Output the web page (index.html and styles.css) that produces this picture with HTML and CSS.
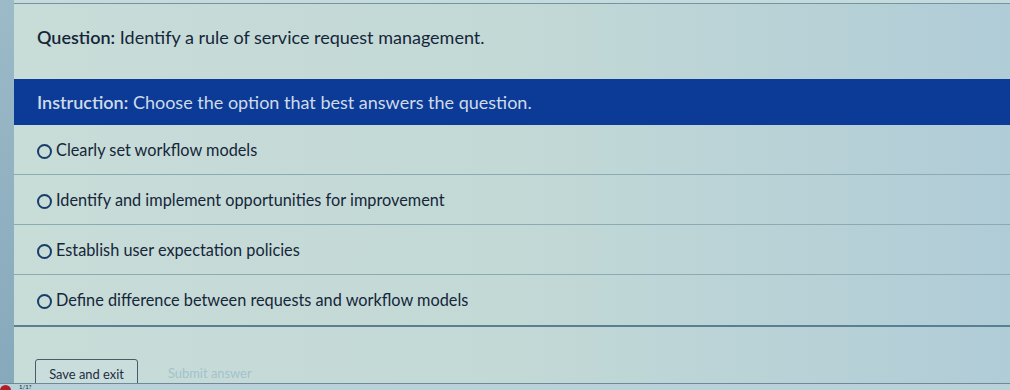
FILE: index.html
```html
<!DOCTYPE html>
<html lang="en">
<head>
    <meta charset="UTF-8">
    <meta name="viewport" content="width=device-width, initial-scale=1.0">
    <title>Question</title>
    <link rel="stylesheet" href="styles.css">
</head>
<body>
    <div class="screen">
        <!-- left edge strip -->
        <div class="edge"></div>
        <div class="panel">
            <div class="question"><b>Question:</b> Identify a rule of service request management.</div>
            <div class="instruction"><b>Instruction:</b> Choose the option that best answers the question.</div>
            <ul class="options">
                <li><span class="radio"></span>Clearly set workflow models</li>
                <li><span class="radio"></span>Identify and implement opportunities for improvement</li>
                <li><span class="radio"></span>Establish user expectation policies</li>
                <li class="last"><span class="radio"></span>Define difference between requests and workflow models</li>
            </ul>
            <div class="actions">
                <button class="btn">Save and exit</button>
                <span class="submit">Submit answer</span>
            </div>
        </div>
    </div>
    <div class="taskbar"><span class="dot"></span><span class="count">1/1?</span></div>
</body>
</html>
```

FILE: styles.css
```css
body,ul,li{
    margin: 0;
    padding: 0;
}
body{
    width: 1010px;
    height: 390px;
    overflow: hidden;
    position: relative;
    font-family: Lato, "Open Sans", sans-serif;
    color: #15263a;
    background: #c6dadb;
}
.screen{
    display: flex;
    height: 383px;
}
.edge{
    width: 14px;
    background: linear-gradient(#9cbac8, #86a9bb);
    flex: none;
}
.panel{
    flex: 1;
    border-top: 1px solid #6f96a6;
    margin-top: 3px;
    background: linear-gradient(90deg, #c8dcd8 0%, #c3d9d6 50%, #b0ccd7 100%);
}
.question{
    height: 75px;
    box-sizing: border-box;
    padding: 22px 0 0 23px;
    font-size: 18px;
}
.question b{
    font-weight: 600;
}
.instruction{
    height: 46px;
    box-sizing: border-box;
    padding: 12px 0 0 23px;
    background: #0b3b97;
    color: #d0dae8;
    font-size: 18px;
}
.instruction b{
    font-weight: 600;
}
.options li{
    list-style: none;
    height: 50px;
    box-sizing: border-box;
    padding: 15px 0 0 23px;
    border-bottom: 1px solid #8caab2;
    font-size: 16.3px;
    display: flex;
    align-items: flex-start;
}
.options li.last{
    height: 52px;
    border-bottom: 2px solid #5a7f93;
}
.radio{
    width: 11px;
    height: 11px;
    border: 2px solid #173e6a;
    border-radius: 50%;
    margin: 4px 4px 0 0;
    flex: none;
}
.actions{
    display: flex;
    align-items: flex-start;
    padding: 32px 0 0 21px;
    gap: 30px;
}
.btn{
    width: 103px;
    height: 30px;
    border: 1px solid #4a5a66;
    border-radius: 3px;
    background: #cadddd;
    font-family: Lato, sans-serif;
    font-size: 12.9px;
    color: #1e2e3e;
    padding: 0;
    text-align: center;
    vertical-align: top;
}
.submit{
    font-size: 12.9px;
    color: #a3c2cc;
    padding-top: 6px;
}
.taskbar{
    position: absolute;
    left: 0;
    top: 383px;
    width: 1010px;
    height: 7px;
    background: #b9d2da;
    border-top: 1px solid #6d8a98;
    display: flex;
    align-items: flex-start;
    overflow: hidden;
}
.dot{
    width: 11px;
    height: 11px;
    border-radius: 50%;
    background: #b01c2a;
    margin: 1px 0 0 0;
    flex: none;
}
.count{
    font-size: 6px;
    color: #223;
    margin: 0 0 0 8px;
    line-height: 6px;
}
```
